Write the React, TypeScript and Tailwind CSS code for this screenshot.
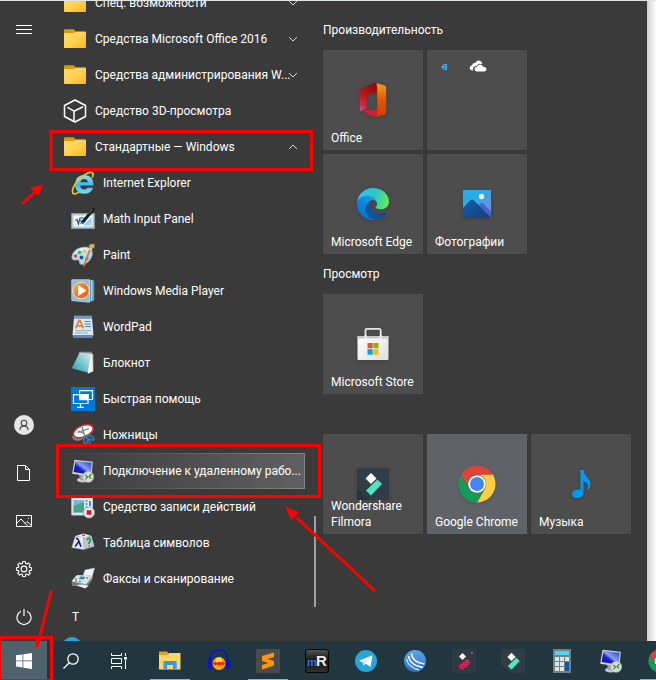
import React from 'react';

type IconProps = { className?: string };

const Folder = ({ className = '' }: IconProps) => (
  <svg viewBox="0 0 24 24" className={`size-6 ${className}`} aria-hidden>
    <defs>
      <linearGradient id="folder" x1="0" y1="0" x2="1" y2="1">
        <stop offset="0" stopColor="#ffdc72" />
        <stop offset=".55" stopColor="#ffd04b" />
        <stop offset="1" stopColor="#f8b716" />
      </linearGradient>
    </defs>
    <path d="M1 3.2Q1 2.2 2 2.2H10Q11 2.2 11.6 3L12.6 4.6V8H1Z" fill="#dd9a04" />
    <path d="M1 6H11L13 4.6H22.4Q23 4.6 23 5.2V20.2Q23 21 22.2 21H1.8Q1 21 1 20.2Z" fill="url(#folder)" />
  </svg>
);

const Cube = () => (
  <svg viewBox="0 0 24 24" className="size-6" fill="none" stroke="#fff" strokeWidth="1.5" strokeLinejoin="round" aria-hidden>
    <path d="M12 1L22.5 6.5V17.5L12 23L1.500 17.500V6.500Z" />
    <path d="M5 8.600L11 12.200V22.500M11.500 12L19.500 8" strokeLinecap="round" />
  </svg>
);

const Explorer = () => (
  <svg viewBox="0 0 24 24" className="size-6" fill="none" aria-hidden>
    <defs>
      <linearGradient id="ie" x1="0" y1="0" x2="0" y2="1">
        <stop offset="0" stopColor="#8fe4fb" />
        <stop offset=".5" stopColor="#3cbbee" />
        <stop offset="1" stopColor="#79d9f7" />
      </linearGradient>
    </defs>
    <path d="M22.500 14.500H9.300Q9.600 18.400 13.200 18.400Q15.600 18.400 16.600 16.700H22.200Q20 22.800 13.200 22.800Q4 22.600 3.900 13.200Q4.300 4.300 13.200 3.900Q22.700 4.200 22.500 14.500ZM9.400 11.200H17Q16.600 8 13.200 7.900Q9.900 8 9.400 11.200Z" fill="url(#ie)" />
    <path d="M21.500 5.800C23.400 1.600 20.600 .3 16 2.500C9 5.500 2.500 14 1.500 19.500C1 23.400 3.700 23.500 7.500 21.500" stroke="#f6c21c" strokeWidth="1.700" strokeLinecap="round" />
  </svg>
);

const MathPanel = () => (
  <svg viewBox="0 0 24 24" className="size-6" fill="none" aria-hidden>
    <path d="M.5 6.500H23.500V21.500H.5Z" fill="#b9c6cd" stroke="#8799a3" />
    <path d="M3 9H21V19H3Z" fill="#e8f3fb" stroke="#fff" />
    <path d="M12 18.500L20.500 10V18.500Z" fill="#9ccdf0" />
    <path d="M4.500 13.500L6 12.500L7.500 17L9 11H14M9.500 13L12 16.500M12 13L9.500 16.500" stroke="#315a86" strokeWidth="1.200" />
    <path d="M22.500 2L11.500 15.500" stroke="#151c20" strokeWidth="2.800" strokeLinecap="round" />
    <path d="M21.500 2L17.500 7" stroke="#5c7a86" strokeWidth="1" />
    <path d="M10 17.500L10.800 14.500L12.800 16Z" fill="#39a2d8" />
  </svg>
);

const Paint = () => (
  <svg viewBox="0 0 24 24" className="size-6" fill="none" aria-hidden>
    <path d="M12 4.200C19 3.200 22.500 7 21 12.500C19.500 18 15 21.500 10.500 21.400C7 21 9.500 17.500 7 16.800C4.500 17 1 18 .8 14.500C1.200 9 5.500 5 12 4.200Z" fill="#b9dcf2" stroke="#7ba9c9" strokeWidth=".8" />
    <path d="M12 5C7 5.500 3 9 2 13C5 8 11 7 19 8C17.500 5.500 15 4.800 12 5Z" fill="#eaf6fd" />
    <circle cx="4.500" cy="13" r="1.700" fill="#df4337" />
    <circle cx="8.500" cy="9.300" r="1.900" fill="#53b64a" />
    <circle cx="13.500" cy="7.800" r="1.800" fill="#ecc440" />
    <circle cx="10.500" cy="14.500" r="1.900" fill="#1e5a86" />
    <circle cx="16" cy="15.500" r="1.700" fill="#3288cf" />
    <path d="M19.600 5L13 22.500" stroke="#da7c1c" strokeWidth="1.900" strokeLinecap="round" />
    <path d="M18.700 5.500L18 2L20 1.200L23 .8L23.700 4L21 6.200Z" fill="#d3a66e" />
    <path d="M18.300 5.800L20.700 6.700" stroke="#e6ebee" strokeWidth="1.300" />
  </svg>
);

const MediaPlayer = () => (
  <svg viewBox="0 0 24 24" className="size-6" fill="none" aria-hidden>
    <defs>
      <linearGradient id="wmp" x1="0" y1="0" x2="1" y2="1">
        <stop offset="0" stopColor="#ffb35c" />
        <stop offset=".5" stopColor="#f47a1e" />
        <stop offset="1" stopColor="#e25a09" />
      </linearGradient>
    </defs>
    <path d="M14 1.500H23.300V21.500L14 23Z" fill="#5b98b8" />
    <path d="M14 1H21.500V22L14 23Z" fill="#a6d3e4" />
    <path d="M14 .8H19.800V22.500L14 23.200Z" fill="#4d8aac" />
    <path d="M.8 .8H18.500V23.200L.8 21.500Z" fill="#8dbdd2" stroke="#c1e0eb" strokeWidth=".8" />
    <circle cx="10" cy="11.500" r="8.300" fill="url(#wmp)" stroke="#e9f4f8" strokeWidth=".8" />
    <path d="M7.200 6V17L15.500 11.500Z" fill="#fff" />
  </svg>
);

const WordPad = () => (
  <svg viewBox="0 0 24 24" className="size-6" fill="none" aria-hidden>
    <path d="M3 .5H21V6H3Z" fill="#46698f" />
    <path d="M3 2.500H21L22.500 20.500H1.500Z" fill="#dcebf7" />
    <path d="M3 .8H21V3.800H3Z" fill="#7198be" />
    <path d="M1.500 20H22.500L21.500 23H2.500Z" fill="#5b87bb" />
    <path d="M4.500 13.500L8 5.500H9L12.500 13.500M6 10.800H11" stroke="#e8822d" strokeWidth="1.800" />
    <path d="M13.500 6.500H19.500M13.500 9H19.800M14 11.500H20" stroke="#4f83bc" strokeWidth="1.200" />
    <path d="M4 15.700H20M4 18H17" stroke="#92a8ba" strokeWidth="1" />
  </svg>
);

const Notepad = () => (
  <svg viewBox="0 0 24 24" className="size-6" fill="none" aria-hidden>
    <defs>
      <linearGradient id="note" x1="0" y1="1" x2="1" y2="0">
        <stop offset="0" stopColor="#2d98ac" />
        <stop offset=".5" stopColor="#79c7d0" />
        <stop offset="1" stopColor="#d9eff0" />
      </linearGradient>
    </defs>
    <path d="M20 2.500L23 3.500V19.500L20 21Z" fill="#87622c" />
    <path d="M18.500 3L21.500 2.500L22 20.500L17 22.500Z" fill="#eff4f2" />
    <path d="M8.500 1.800L20.500 2.500L16.500 21.500L.8 17.200Z" fill="url(#note)" />
    <path d="M8.500 1.500H21" stroke="#d9e5e4" strokeWidth="1.300" strokeDasharray="1 1" />
    <path d="M16.500 21.500L20.500 3L18 22.500Z" fill="#fff" />
  </svg>
);

const QuickAssist = () => (
  <svg viewBox="0 0 24 24" className="size-6" fill="none" stroke="#fff" strokeWidth="1.200" aria-hidden>
    <path d="M0 0H24V24H0Z" fill="#0078d7" stroke="none" />
    <path d="M8.600 6.500V3.600H21.500V12.500H18" />
    <path d="M2.500 7.600H17V16.500H2.500Z" />
    <path d="M8.600 7.600H17V12.600H8.600Z" fill="#fff" />
    <path d="M9.500 16.500V20M6 20.400H13" />
  </svg>
);

const Snipping = () => (
  <svg viewBox="0 0 24 24" className="size-6" fill="none" aria-hidden>
    <path d="M1 13.500Q1.500 18.500 9 17.500L18 13L21.500 9Z" fill="#85898a" />
    <ellipse cx="12.200" cy="8.300" rx="10.500" ry="5.600" transform="rotate(-22 12.200 8.300)" fill="#fff" stroke="#d9252b" strokeWidth="1.500" />
    <path d="M6.500 9.500L18 5.500M11 4L14.500 15M7 8L13 10.500" stroke="#747a7d" strokeWidth="1.200" />
    <path d="M14 13.500Q18 11 22.500 14.500Q24 17.500 20.500 17L14 14Q11.500 17 13.500 20.500Q16 21.500 17 16" stroke="#247fba" strokeWidth="1.700" />
    <path d="M17.500 16L19 21" stroke="#247fba" strokeWidth="1.500" />
  </svg>
);

const RemoteDesktop = () => (
  <svg viewBox="0 0 24 24" className="size-6" fill="none" aria-hidden>
    <defs>
      <linearGradient id="rdp" x1="0" y1="1" x2="1" y2="0">
        <stop offset="0" stopColor="#050f9b" />
        <stop offset=".4" stopColor="#1522cf" />
        <stop offset=".55" stopColor="#8aa0f2" />
        <stop offset="1" stopColor="#1536cf" />
      </linearGradient>
    </defs>
    <ellipse cx="12" cy="21" rx="6" ry="2.400" fill="#c7c9c8" />
    <path d="M8 15L15 16.500L14 21H9Z" fill="#9ea2a2" />
    <path d="M3.500 .8L21.800 2.800L20.500 17.800L1.200 14.700Z" fill="#d4d5cf" />
    <path d="M4.500 2L20.600 3.800L19.600 15.700L2.600 13Z" fill="url(#rdp)" />
    <circle cx="17.200" cy="17.800" r="5.500" fill="#dcddda" stroke="#aeb0ad" strokeWidth=".7" />
    <path d="M14 16L16.500 17.800L14.500 20.500M20.500 15L18 17.600L20.200 19.600" stroke="#268c31" strokeWidth="1.200" />
  </svg>
);

const StepsRecorder = () => (
  <svg viewBox="0 0 24 24" className="size-6" fill="none" aria-hidden>
    <path d="M.8 2.500H21.500V20H.8Z" fill="#e8edef" stroke="#c3ccd0" />
    <path d="M2.500 5H13V17.500H2.500Z" fill="#78b9d9" />
    <path d="M2.500 11L13 7V17.500H2.500Z" fill="#47a587" />
    <path d="M14.500 6H16.500M14.500 9H16.500M14.500 12H16.500" stroke="#3479b7" strokeWidth="1.500" />
    <path d="M18 6H20V11H18Z" fill="#3e8acb" />
    <circle cx="18" cy="17.500" r="5.500" fill="#e5e8e9" stroke="#9fa5a8" strokeWidth=".8" />
    <path d="M15.700 15.200H20.300V19.800H15.700Z" fill="#df1420" />
  </svg>
);

const CharMap = () => (
  <svg viewBox="0 0 24 24" className="size-6" fill="none" aria-hidden>
    <path d="M4.500 5L12.500 2.500L20.500 5L12.500 6.500Z" fill="#eff3f5" />
    <path d="M4.500 5L12.500 6L13 18.500L.8 16.500Z" fill="#e4eaef" stroke="#b1bbc4" strokeWidth=".6" />
    <path d="M12.500 6L20.500 5L23.500 15.500L13 18.500Z" fill="#b9c5d1" />
    <path d="M5 7.500Q7 7 7.700 9.500L10 15.800M7.800 10.500L4.200 15.500" stroke="#181b84" strokeWidth="1.600" />
    <path d="M16 9Q16.700 6.800 18.700 7.600Q20.500 9 17.800 12.200V13M18 14.500V15.800" stroke="#289452" strokeWidth="1.600" />
    <path d="M11 4.200H14" stroke="#d51b23" strokeWidth="1.200" />
  </svg>
);

const Fax = () => (
  <svg viewBox="0 0 24 24" className="size-6" fill="none" aria-hidden>
    <path d="M14 3L23.500 1L20.500 12H11Z" fill="#f1f4f4" stroke="#afb8bb" strokeWidth=".6" />
    <path d="M5 9L19.500 8L21.500 11L16 20L1 18.500L.8 14Z" fill="#c5cdcf" />
    <path d="M1 14L6 8L19 9L15.500 17Z" fill="#dfe4e3" />
    <path d="M.8 14.500L15 17.500V20.500L1 18.500Z" fill="#6f7b80" />
    <path d="M15.500 17L21.500 10.500L20.500 14.500L15.500 20.500Z" fill="#6d7b80" />
    <path d="M9 9.500L14 9.800L13 12.500L8 12Z" fill="#288ac6" />
    <path d="M4 12H6M4 14H6M8 14.500H10" stroke="#5d6c72" />
    <path d="M15 11H17" stroke="#4dbb2b" strokeWidth="1.500" />
    <path d="M5 18L12 17.500L17.500 19L14 21.500Z" fill="#edf0ef" />
  </svg>
);

const Office = () => (
  <svg viewBox="0 0 28 36" className="h-9 w-7" aria-hidden>
    <defs>
      <linearGradient id="officeLeft" x1="0" y1="1" x2=".5" y2="0">
        <stop offset="0" stopColor="#b7539d" />
        <stop offset=".35" stopColor="#cc1f27" />
        <stop offset="1" stopColor="#8f0d0d" />
      </linearGradient>
      <linearGradient id="officeRight" x1="0" y1="0" x2="0" y2="1">
        <stop offset="0" stopColor="#f7a30b" />
        <stop offset=".5" stopColor="#e55305" />
        <stop offset="1" stopColor="#d83b01" />
      </linearGradient>
    </defs>
    <path d="M.8 7.500L15 .8H18V10L9 13Q7.800 13.500 7.800 15V24.500Q7.800 26 6.500 26.700L2.300 29Q.8 29.500 .8 28Z" fill="url(#officeLeft)" />
    <path d="M17 1.200L25 3.300Q27.200 4 27.200 6.300V30.200Q27.200 32.200 25 32.800L17 34.800Q18.200 33.500 18.200 30V6Q18.200 2.500 17 1.200Z" fill="url(#officeRight)" />
    <path d="M5 28H18.200V32Q17.500 35.700 13.500 34.400L5.500 29.700Q4.500 28.800 5 28Z" fill="#d31f36" />
  </svg>
);

const OneDrive = () => (
  <svg viewBox="0 0 18 12" className="h-3 w-[18px]" aria-hidden>
    <path d="M4 10.500Q.6 10.500 .7 7.700Q.9 5.500 3 5.300Q3.800 2.300 6.500 2.700Q8.200 -.5 11.400 1Q13.300 2 13.200 4.200Q9.500 2.500 7.500 5.900Q4.200 6.100 4 8.800Z" fill="#fff" />
    <path d="M5.500 8.800Q5.600 6.800 8 6.800Q9.800 3.400 13 5.300L14 6.800Q17.500 6.700 17.500 9.300Q17.300 11.200 15.400 11.500H7.500Q5.500 11 5.500 8.800Z" fill="#fff" />
  </svg>
);

const Outlook = () => (
  <svg viewBox="0 0 6 6" className="size-1.5" aria-hidden>
    <path d="M2 0H6V6H2Z" fill="#38a5e5" />
    <path d="M0 1H4V5H0Z" fill="#0f65b4" />
    <circle cx="2" cy="3" r="1" fill="none" stroke="#fff" strokeWidth=".5" />
  </svg>
);

const Edge = () => (
  <svg viewBox="0 0 256 256" className="size-8" aria-hidden>
    <defs>
      <linearGradient id="edgeA" x1="63" y1="177" x2="241" y2="177" gradientUnits="userSpaceOnUse">
        <stop offset="0" stopColor="#0c59a4" />
        <stop offset="1" stopColor="#114a8b" />
      </linearGradient>
      <linearGradient id="edgeB" x1="157" y1="100" x2="46" y2="221" gradientUnits="userSpaceOnUse">
        <stop offset="0" stopColor="#1b9de2" />
        <stop offset=".5" stopColor="#1385d9" />
        <stop offset="1" stopColor="#0078d4" />
      </linearGradient>
      <linearGradient id="edgeC" x1="10" y1="60" x2="250" y2="120" gradientUnits="userSpaceOnUse">
        <stop offset="0" stopColor="#35c1f1" />
        <stop offset=".55" stopColor="#2ec7c5" />
        <stop offset="1" stopColor="#66eb4d" />
      </linearGradient>
    </defs>
    <path d="M235.700 195.500a93.700 93.700 0 0 1-10.600 4.700 101.900 101.900 0 0 1-35.900 6.400c-47.300 0-88.500-32.500-88.500-74.300a31.500 31.500 0 0 1 16.400-27.300c-42.800 1.800-53.800 46.400-53.800 72.500 0 73.900 68.100 81.400 82.800 81.400 7.900 0 19.800-2.300 27-4.600l1.300-.4a128.300 128.300 0 0 0 66.600-52.800 4 4 0 0 0-5.300-5.600z" fill="url(#edgeA)" />
    <path d="M105.700 241.400a79.200 79.200 0 0 1-22.700-21.300 80.700 80.700 0 0 1 29.500-120c3.200-1.500 8.500-4.100 15.600-4a32.400 32.400 0 0 1 25.700 13 31.900 31.900 0 0 1 6.300 18.700c0-.2 24.500-79.600-80-79.600-43.900 0-80 41.700-80 78.200a130.200 130.200 0 0 0 12.100 56 128 128 0 0 0 156.400 67 75.500 75.500 0 0 1-62.800-8z" fill="url(#edgeB)" />
    <path d="M152.300 148.900c-.9 1-3.400 2.500-3.400 5.600 0 2.600 1.700 5.200 4.800 7.300 14.300 10 41.400 8.600 41.500 8.600a59.600 59.600 0 0 0 30.300-8.300 61.400 61.400 0 0 0 30.400-52.900c.3-22.400-8-37.300-11.300-43.900C223.500 23.900 177.700 0 128 0A128 128 0 0 0 0 126.200c.5-36.500 36.800-66 80-66 3.500 0 23.500.3 42 10.100 16.300 8.600 24.900 18.900 30.800 29.200 6.200 10.700 7.300 24.100 7.300 29.500 0 5.300-2.700 13.300-7.800 19.900z" fill="url(#edgeC)" />
  </svg>
);

const Photos = () => (
  <svg viewBox="0 0 28 28" className="size-7" aria-hidden>
    <defs>
      <linearGradient id="photoSky" x1="0" y1="0" x2="1" y2="1">
        <stop offset=".4" stopColor="#27aee9" />
        <stop offset="1" stopColor="#967ce4" />
      </linearGradient>
      <linearGradient id="photoHill" x1="0" y1="0" x2="1" y2="1">
        <stop offset="0" stopColor="#155ea6" />
        <stop offset="1" stopColor="#173c7c" />
      </linearGradient>
    </defs>
    <path d="M0 0H28V28H0Z" fill="url(#photoSky)" />
    <path d="M13 17L17 13.500Q18.700 12.300 20.400 13.800L28 21.500V28H16Z" fill="#4865c4" />
    <path d="M0 18L7 10.500Q9 8.500 11 10.500L28 28H0Z" fill="url(#photoHill)" />
    <circle cx="18.500" cy="6.500" r="2.700" fill="#f1f1ee" />
  </svg>
);

const Store = () => (
  <svg viewBox="0 0 34 34" className="size-[34px]" aria-hidden>
    <defs>
      <linearGradient id="bag" x1="0" y1="0" x2="1" y2="1">
        <stop offset="0" stopColor="#fff" />
        <stop offset="1" stopColor="#dfdfdf" />
      </linearGradient>
    </defs>
    <path d="M9.500 13V3.500Q9.500 1.800 11.200 1.800H23Q24.700 1.800 24.700 3.500V13" fill="none" stroke="#e6e6e6" strokeWidth="1.800" />
    <path d="M1.500 9H32.500V32Q32.500 33 31.500 33H2.500Q1.500 33 1.500 32Z" fill="url(#bag)" />
    <path d="M1.500 9H32.500V11.500H1.500Z" fill="#c7c7c7" />
    <path d="M9.500 8V11.500M24.700 8V11.500" stroke="#f5f5f5" strokeWidth="1.800" />
    <path d="M11.500 16H16.700V21.200H11.500Z" fill="#f25022" />
    <path d="M17.300 16H22.500V21.200H17.300Z" fill="#7fba00" />
    <path d="M11.500 22.200H16.700V27.700H11.500Z" fill="#00a4ef" />
    <path d="M17.300 22.200H22.500V27.700H17.300Z" fill="#ffb900" />
  </svg>
);

const Filmora = ({ className = '' }: IconProps) => (
  <svg viewBox="0 0 32 32" className={className} aria-hidden>
    <path d="M0 0H32V32H0Z" fill="#303c46" />
    <path d="M0 20L12 32H0Z" fill="#28343d" />
    <path d="M14 5L19.500 10.500L14 16L8.500 10.500Z" fill="#fff" />
    <path d="M20.500 11.500L25 16L14 27.500L9 22.500Z" fill="#52e3c2" />
  </svg>
);

const FilmoraScreen = () => (
  <svg viewBox="0 0 24 24" className="size-6" aria-hidden>
    <path d="M0 0H24V24H0Z" fill="#303a45" />
    <path d="M10.500 4L14 7.500L10.500 11L7 7.500Z" fill="#fff" />
    <path d="M13 11.500H17M10.500 13.500H18M8 15.500H17M6.500 17.500H15M8 19.500H12" stroke="#d62c5e" strokeWidth="1.300" />
    <path d="M19 3H21V5H19Z" fill="#d62c5e" />
  </svg>
);

const Chrome = ({ className = '' }: IconProps) => (
  <svg viewBox="0 0 38 38" className={className} aria-hidden>
    <path d="M3 9.750A18.500 18.500 0 0 1 35 9.750H19A9.250 9.250 0 0 0 11 23.600Z" fill="#db4437" />
    <path d="M35 9.750A18.500 18.500 0 0 1 19 37.500L27 23.600A9.250 9.250 0 0 0 19 9.750Z" fill="#ffcd40" />
    <path d="M3 9.750A18.500 18.500 0 0 0 19 37.500L27 23.600A9.250 9.250 0 0 1 11 23.600Z" fill="#0f9d58" />
    <circle cx="19" cy="19" r="8.800" fill="#fff" />
    <circle cx="19" cy="19" r="7" fill="#4285f4" />
  </svg>
);

const Note = () => (
  <svg viewBox="0 0 20 30" className="h-[30px] w-5" aria-hidden>
    <path d="M9.500 1H12.500Q12.800 5 16 8Q21.800 14 17.700 20.700H16.300Q19 14.500 12.500 12V24Q12 28.500 6.500 29Q1 29 1 25Q1.300 20.700 6.500 20.400Q8.200 20.300 9.500 21Z" fill="#0099f5" />
  </svg>
);

const FileExplorer = () => (
  <svg viewBox="0 0 24 24" className="size-6" aria-hidden>
    <path d="M1 3Q1 2.500 1.500 2.500H9L10.500 4.500V7H1Z" fill="#e3a21c" />
    <path d="M1 6H9.500L11 4H22.500V20.500H1Z" fill="#ffd766" />
    <path d="M5.500 12H18.500V20.500H15V16H9V20.500H5.500Z" fill="#3c94d5" />
    <path d="M5 12.500H6.500V20.500H5ZM17.500 12.500H19V20.500H17.500Z" fill="#62b2e6" />
  </svg>
);

const Audacity = () => (
  <svg viewBox="0 0 24 24" className="size-6" fill="none" aria-hidden>
    <circle cx="12" cy="14.500" r="6.500" fill="#f5a81b" />
    <circle cx="12" cy="11.500" r="3" fill="#f8dc3c" />
    <path d="M5.500 14.500L8 12.800L10 13.800L12 12.500L14 13.500L16 12.800L18.500 14.500L16 16.200L14 15.500L12 16.500L10 15.500L8 16.200Z" fill="#ff1c00" />
    <path d="M3 13V10Q4 1 12 1Q20 1 21 10V13" stroke="#0b10e0" strokeWidth="1.600" />
    <path d="M2 11H4.500V21L1 18.500Q-.5 14.500 2 11ZM22 11H19.500V21L23 18.500Q24.500 14.500 22 11Z" fill="#0b10e0" />
  </svg>
);

const Sublime = () => (
  <svg viewBox="0 0 24 24" className="size-6" aria-hidden>
    <rect width="24" height="24" rx="1" fill="#4b4b4b" />
    <path d="M6 7L18 3.500V8L11.500 10L18 12V16.500L6 20.500V16L12.500 14L6 12Z" fill="#ff9800" />
  </svg>
);

const MRemote = () => (
  <svg viewBox="0 0 24 24" className="size-6" aria-hidden>
    <defs>
      <linearGradient id="mr" x1="0" y1="0" x2="0" y2="1">
        <stop offset="0" stopColor="#555" />
        <stop offset=".5" stopColor="#111" />
        <stop offset="1" stopColor="#333" />
      </linearGradient>
    </defs>
    <rect x=".5" y=".5" width="23" height="23" rx="2.500" fill="url(#mr)" stroke="#060606" />
    <text x="2" y="17" fill="#3471e6" className="font-['Liberation_Sans',sans-serif] text-[11px] font-bold">m</text>
    <text x="11" y="17" fill="#ebebeb" className="font-['Liberation_Sans',sans-serif] text-[15px] font-bold">R</text>
  </svg>
);

const Telegram = ({ className = '' }: IconProps) => (
  <svg viewBox="0 0 22 22" className={className} aria-hidden>
    <circle cx="11" cy="11" r="11" fill="#29a4da" />
    <path d="M4 10.700L17.500 5.300L15.500 17L10.500 13.500L8.500 15.800L7.700 12.400Z" fill="#fff" />
    <path d="M7.700 12.400L15 7.500L9.500 13L8.500 15.800Z" fill="#bfdceb" />
  </svg>
);

const Globe = () => (
  <svg viewBox="0 0 22 22" className="size-[22px]" fill="none" aria-hidden>
    <defs>
      <linearGradient id="globe" x1="0" y1="0" x2="0" y2="1">
        <stop offset="0" stopColor="#60a6ea" />
        <stop offset="1" stopColor="#2470c8" />
      </linearGradient>
    </defs>
    <circle cx="11" cy="11" r="11" fill="url(#globe)" />
    <path d="M4.500 6Q6 15.500 19 17.500M7.500 3.500Q8 12 20.500 14" stroke="#fff" strokeWidth="1.500" />
    <path d="M2.500 9Q4 17 15 20" stroke="#dcecff" strokeWidth="1.300" />
  </svg>
);

const Calculator = () => (
  <svg viewBox="0 0 18 24" className="h-6 w-[18px]" aria-hidden>
    <path d="M0 0H18V24H0Z" fill="#728087" />
    <path d="M2 2H16V6H2Z" fill="#48d7f8" />
    <path d="M2 8H6V12H2ZM7 8H11V12H7ZM12 8H16V12H12ZM2 13H6V17H2ZM7 13H11V17H7ZM2 18H6V22H2ZM7 18H11V22H7Z" fill="#dde5e9" />
    <path d="M12 13H16V22H12Z" fill="#11579c" />
  </svg>
);

const Chevron = ({ open = false }: { open?: boolean }) => (
  <svg viewBox="0 0 10 6" className="h-1.5 w-2.5 shrink-0" fill="none" stroke="#d6d6d6" aria-hidden>
    <path d={open ? 'M1 5L5 1L9 5' : 'M1 1L5 5L9 1'} />
  </svg>
);

const groups = [
  { label: 'Спец. возможности', icon: <Folder />, chevron: true },
  { label: 'Средства Microsoft Office 2016', icon: <Folder />, chevron: true },
  { label: 'Средства администрирования W...', icon: <Folder />, chevron: true },
  { label: 'Средство 3D-просмотра', icon: <Cube />, chevron: false },
  { label: 'Стандартные — Windows', icon: <Folder />, chevron: true, open: true },
];

const accessories = [
  { label: 'Internet Explorer', icon: <Explorer /> },
  { label: 'Math Input Panel', icon: <MathPanel /> },
  { label: 'Paint', icon: <Paint /> },
  { label: 'Windows Media Player', icon: <MediaPlayer /> },
  { label: 'WordPad', icon: <WordPad /> },
  { label: 'Блокнот', icon: <Notepad /> },
  { label: 'Быстрая помощь', icon: <QuickAssist /> },
  { label: 'Ножницы', icon: <Snipping /> },
  { label: 'Подключение к удаленному рабо...', icon: <RemoteDesktop />, active: true },
  { label: 'Средство записи действий', icon: <StepsRecorder /> },
  { label: 'Таблица символов', icon: <CharMap /> },
  { label: 'Факсы и сканирование', icon: <Fax /> },
];

const tileGroups = [
  {
    title: 'Производительность',
    tiles: [
      { label: 'Office', icon: <Office /> },
      { label: '', icon: null },
      { label: 'Microsoft Edge', icon: <Edge /> },
      { label: 'Фотографии', icon: <Photos /> },
    ],
  },
  { title: 'Просмотр', tiles: [{ label: 'Microsoft Store', icon: <Store /> }] },
  {
    title: '',
    tiles: [
      { label: 'Wondershare Filmora', icon: <Filmora className="size-8" /> },
      { label: 'Google Chrome', icon: <Chrome className="size-[38px]" />, tone: 'bg-[#5f6368]' },
      { label: 'Музыка', icon: <Note /> },
    ],
  },
];

const railIcons = [
  {
    name: 'Пользователь',
    icon: (
      <svg viewBox="0 0 20 20" className="size-5" fill="none" aria-hidden>
        <circle cx="10" cy="10" r="10" fill="#e6e6e6" />
        <circle cx="10" cy="8" r="2.800" stroke="#444" strokeWidth="1.100" />
        <path d="M5.800 15Q6.300 10.900 10 10.900Q13.700 10.900 14.200 15" stroke="#444" strokeWidth="1.100" />
      </svg>
    ),
  },
  {
    name: 'Документы',
    icon: (
      <svg viewBox="0 0 16 18" className="h-[18px] w-4" fill="none" stroke="#fff" aria-hidden>
        <path d="M1.500 1.500H9.500L13.500 5.500V16.500H1.500ZM9.500 1.500V5.500H13.500" />
      </svg>
    ),
  },
  {
    name: 'Изображения',
    icon: (
      <svg viewBox="0 0 16 12" className="h-3 w-4" fill="none" stroke="#fff" aria-hidden>
        <path d="M.5 .5H15.500V11.500H.5ZM.5 8.500L5 4L11.500 11M9 8.500L11 6.500L15.500 10.500" />
        <path d="M12 3H13V4H12Z" fill="#fff" stroke="none" />
      </svg>
    ),
  },
  {
    name: 'Параметры',
    icon: (
      <svg viewBox="0 0 24 24" className="size-[18px]" fill="none" stroke="#fff" strokeWidth="1.500" strokeLinejoin="round" aria-hidden>
        <circle cx="12" cy="12" r="3.800" />
        <path d="M10.300 2H13.700L14.300 4.700L15.700 5.300L18 3.800L20.300 6.100L18.800 8.400L19.400 9.800L22 10.300V13.700L19.400 14.200L18.800 15.600L20.300 17.900L18 20.200L15.700 18.700L14.300 19.300L13.700 22H10.300L9.700 19.300L8.300 18.700L6 20.200L3.700 17.900L5.200 15.600L4.600 14.200L2 13.700V10.300L4.600 9.800L5.200 8.400L3.700 6.100L6 3.800L8.300 5.300L9.700 4.700Z" />
      </svg>
    ),
  },
  {
    name: 'Выключение',
    icon: (
      <svg viewBox="0 0 16 18" className="h-[18px] w-4" fill="none" stroke="#fff" strokeWidth="1.200" aria-hidden>
        <path d="M5 3.300A7 7 0 1 0 11 3.300M8 1V8" />
      </svg>
    ),
  },
];

const taskbarApps = [
  { name: 'Проводник', icon: <FileExplorer />, running: true },
  { name: 'Audacity', icon: <Audacity /> },
  { name: 'Sublime Text', icon: <Sublime />, running: true },
  { name: 'mRemote', icon: <MRemote /> },
  { name: 'Telegram', icon: <Telegram className="size-[22px]" /> },
  { name: 'Браузер', icon: <Globe /> },
  { name: 'Filmora Screen', icon: <FilmoraScreen /> },
  { name: 'Filmora', icon: <Filmora className="size-6" /> },
  { name: 'Калькулятор', icon: <Calculator /> },
  { name: 'Удаленный рабочий стол', icon: <RemoteDesktop /> },
  { name: 'Chrome', icon: <Chrome className="size-6" />, running: true },
];

const Rail = () => (
  <nav className="flex w-12 shrink-0 flex-col">
    <button aria-label="Меню" className="mt-[5px] flex h-12 items-center justify-center">
      <svg viewBox="0 0 16 10" className="h-2.5 w-4" stroke="#fff" aria-hidden>
        <path d="M0 .5H16M0 4.500H16M0 8.500H16" />
      </svg>
    </button>
    <div className="mt-auto">
      {railIcons.map(item => (
        <button key={item.name} aria-label={item.name} className="flex h-12 w-12 items-center justify-center">
          {item.icon}
        </button>
      ))}
    </div>
  </nav>
);

const AppList = () => (
  <div className="-mt-4 w-[257px] shrink-0">
    {groups.map(item => (
      <button key={item.label} className="flex h-9 w-full items-center gap-2 pl-[15px] pr-[7px] text-left">
        <span className="shrink-0">{item.icon}</span>
        <span className="min-w-0 flex-1 whitespace-nowrap">{item.label}</span>
        {item.chevron && <Chevron open={item.open} />}
      </button>
    ))}
    {accessories.map(item => (
      <button
        key={item.label}
        className={`flex h-9 w-full items-center gap-2 border pl-[22px] text-left ${
          item.active
            ? 'bg-linear-to-r from-[#3a3a3a] to-[#606060] [border-image:linear-gradient(to_right,#3a3a3a,#858585)_1]'
            : 'border-transparent'
        }`}
      >
        <span className="shrink-0">{item.icon}</span>
        <span className="whitespace-nowrap">{item.label}</span>
      </button>
    ))}
    <button className="flex h-10 w-full items-center pl-6 text-left">T</button>
    <div className="pl-[14px]">
      <Telegram className="size-5" />
    </div>
  </div>
);

const Tiles = () => (
  <main className="flex-1 pl-[7px] pt-[9px]">
    {tileGroups.map(group => (
      <section key={group.title}>
        <h2 className="flex h-10 items-center">{group.title}</h2>
        <div className={`grid gap-1 ${group.title ? 'grid-cols-[100px_100px]' : 'grid-cols-[100px_100px_100px]'}`}>
          {group.tiles.map(tile =>
            tile.label ? (
              <button
                key={tile.label}
                className={`relative flex h-[100px] items-end pb-1 pl-2 text-left leading-4 ${tile.tone ?? 'bg-[#4d4d4d]'}`}
              >
                <span className="absolute inset-0 flex items-center justify-center drop-shadow-sm">{tile.icon}</span>
                <span className="relative">{tile.label}</span>
              </button>
            ) : (
              <div key="folder" className="flex h-[100px] items-start gap-[22px] bg-[#4d4d4d] px-[14px] pt-2.5">
                <span className="pt-1">
                  <Outlook />
                </span>
                <OneDrive />
              </div>
            )
          )}
        </div>
      </section>
    ))}
  </main>
);

const Taskbar = () => (
  <footer className="flex h-[39px] shrink-0 bg-[#21363f]">
    <button aria-label="Пуск" className="flex w-[47px] shrink-0 items-center justify-center bg-[#4d626a]">
      <svg viewBox="0 0 16 16" className="size-4" fill="#fff" aria-hidden>
        <path d="M0 2.300L6.500 1.400V7.500H0ZM7.300 1.300L16 0V7.500H7.300ZM0 8.300H6.500V14.500L0 13.600ZM7.300 8.300H16V16L7.300 14.700Z" />
      </svg>
    </button>
    <button aria-label="Поиск" className="flex w-12 shrink-0 items-center justify-center">
      <svg viewBox="0 0 16 16" className="size-4" fill="none" stroke="#fff" strokeWidth="1.300" aria-hidden>
        <circle cx="10" cy="6" r="5.200" />
        <path d="M6.300 9.700L.5 15.500" />
      </svg>
    </button>
    <button aria-label="Представление задач" className="flex w-12 shrink-0 items-center justify-center">
      <svg viewBox="0 0 18 16" className="h-4 w-[18px]" fill="none" stroke="#fff" aria-hidden>
        <path d="M1.500 0V2.500H11.500V0M1.500 5.500H11.500V10.500H1.500ZM1.500 16V13.500H11.500V16M15.500 0V3M15.500 7V16" />
        <path d="M14 4H17V6.500H14Z" fill="#fff" stroke="none" />
      </svg>
    </button>
    <div className="ml-[3px] flex flex-1 gap-px overflow-hidden">
      {taskbarApps.map(app => (
        <button key={app.name} aria-label={app.name} className="relative flex w-12 shrink-0 items-center justify-center">
          {app.icon}
          {app.running && <span className="absolute inset-x-1 bottom-0 h-px bg-[#76b9ed]" />}
        </button>
      ))}
    </div>
  </footer>
);

const Marks = () => (
  <svg viewBox="0 0 656 680" className="pointer-events-none absolute left-0 top-0 w-[656px]" fill="none" stroke="#f00" strokeWidth="3" aria-hidden>
    <path d="M51 131.500H311.500V169.500H51Z" />
    <path d="M57.500 445.500H319.500V496.500H57.500Z" />
    <path d="M-.5 637.500H51.500V680.500H-.5Z" />
    <path d="M23.500 203L35 192M374 590L297 518M51 592L39 640" strokeLinecap="round" />
    <path d="M43.500 185L38 196L30 187.500ZM285 506.500L299 512L291.500 520ZM36 650L35 635L42.500 637Z" fill="#f00" stroke="none" />
  </svg>
);

const App: React.FC = () => {
  return (
    <div className="relative flex h-screen flex-col overflow-hidden bg-white font-['Roboto','Open_Sans',sans-serif] text-[12px] leading-4 text-white">
      <div className="flex min-h-0 flex-1 border-t border-[#dfe5e3]">
        <div className="flex flex-1 overflow-hidden bg-[#3a3a3a]">
          <Rail />
          <AppList />
          <div className="flex w-[11px] shrink-0 items-end">
            <div className="mb-[34px] ml-auto h-[91px] w-0.5 bg-[#a0a0a0]" />
          </div>
          <Tiles />
        </div>
        <div className="w-[9px] shrink-0 bg-linear-to-r from-[#cfcfcf] to-white" />
      </div>
      <Taskbar />
      <Marks />
    </div>
  );
};

export default App;
